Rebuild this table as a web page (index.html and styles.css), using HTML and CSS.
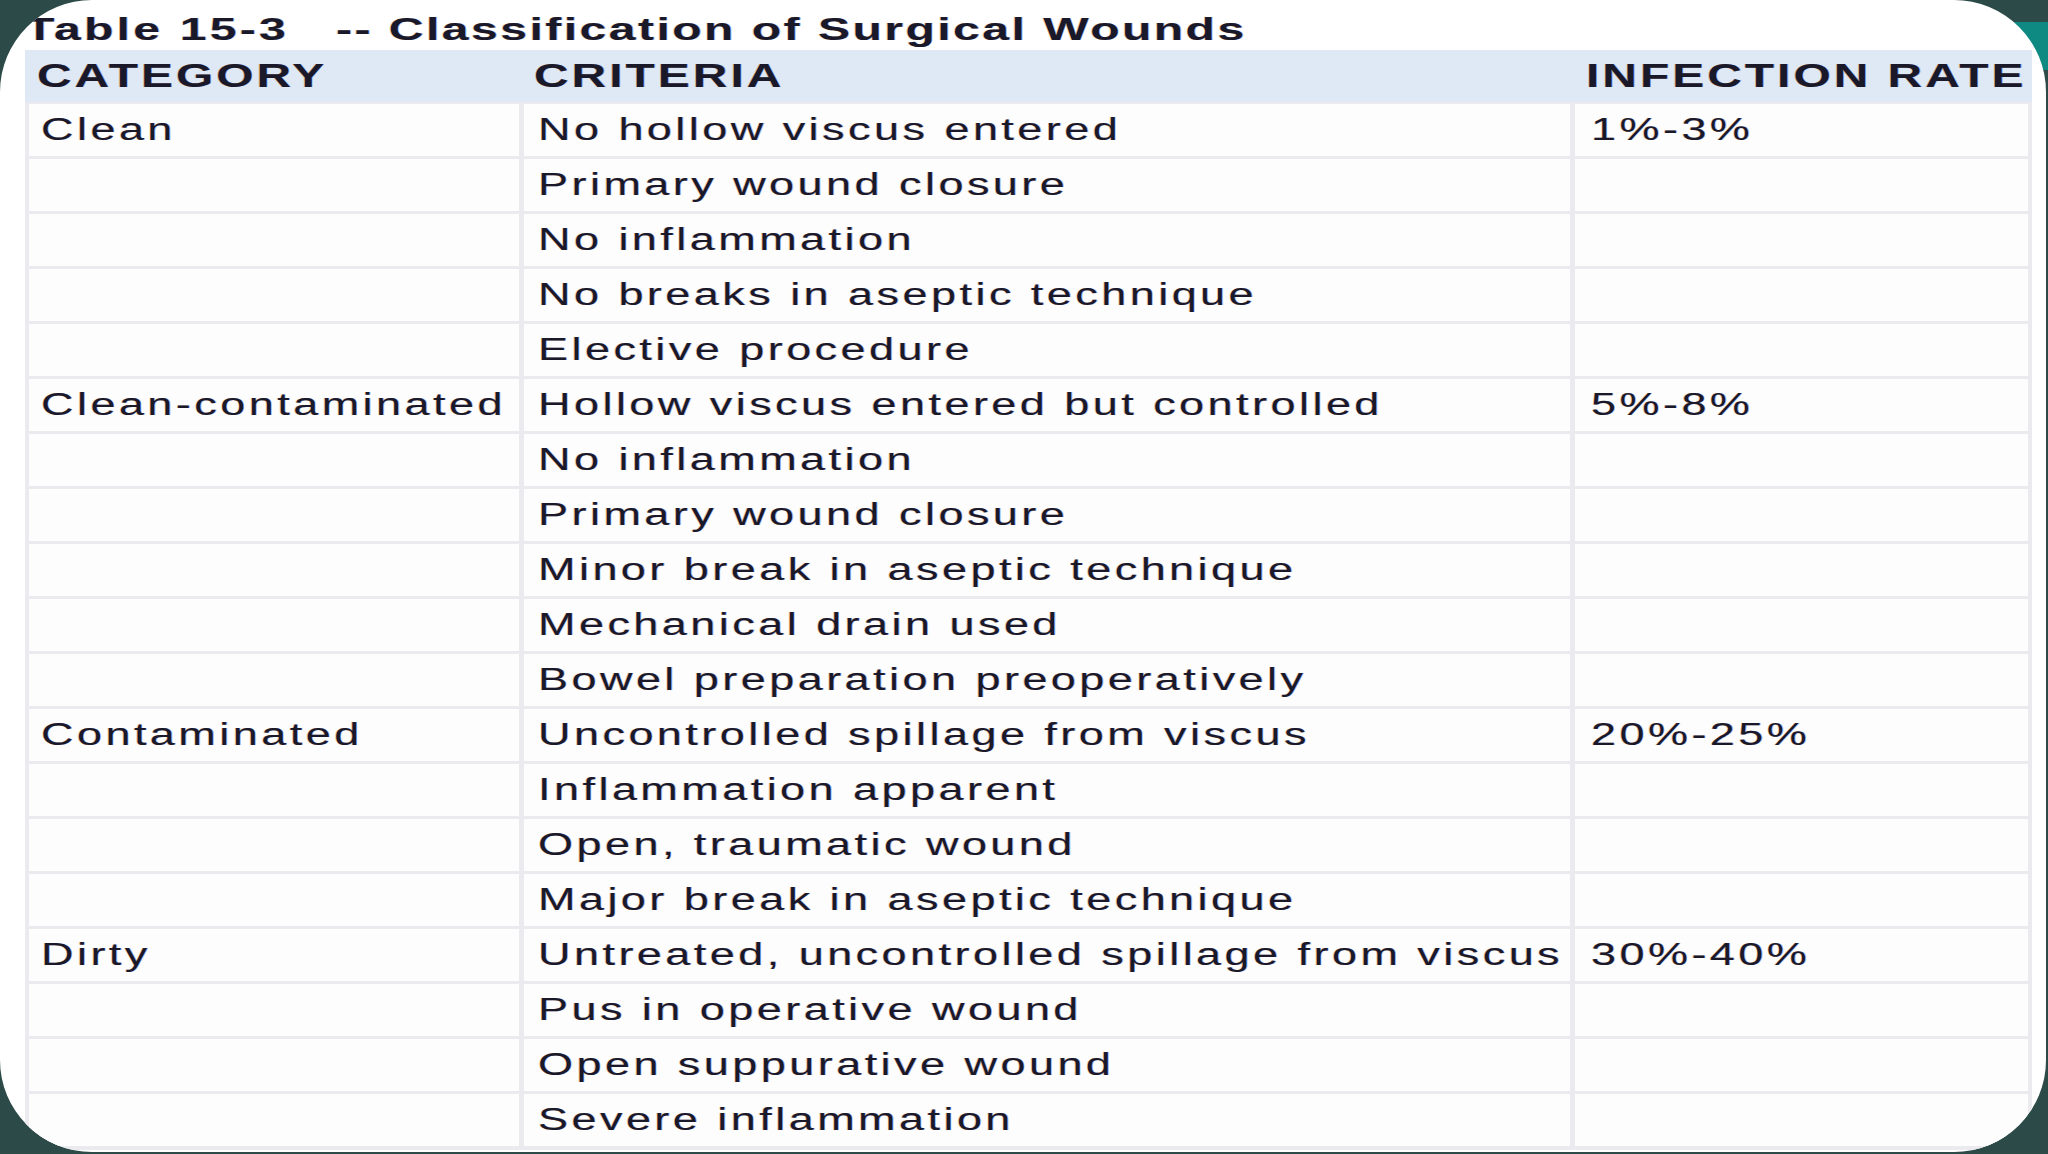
FILE: index.html
```html
<!DOCTYPE html>
<html lang="en">
<head>
<meta charset="utf-8">
<title>Table 15-3 -- Classification of Surgical Wounds</title>
<link rel="stylesheet" href="styles.css">
</head>
<body>
<main class="card">
  <h1 class="title"><span class="t">Table 15-3</span><span class="t">-- Classification of Surgical Wounds</span></h1>
  <div class="head">
    <div class="hcell"><span class="t">CATEGORY</span></div>
    <div class="hcell"><span class="t">CRITERIA</span></div>
    <div class="hcell"><span class="t">INFECTION RATE</span></div>
  </div>
  <div class="grid">
    <div class="cell"><span class="t">Clean</span></div>
    <div class="cell"><span class="t">No hollow viscus entered</span></div>
    <div class="cell"><span class="t">1%-3%</span></div>

    <div class="cell"></div>
    <div class="cell"><span class="t">Primary wound closure</span></div>
    <div class="cell"></div>

    <div class="cell"></div>
    <div class="cell"><span class="t">No inflammation</span></div>
    <div class="cell"></div>

    <div class="cell"></div>
    <div class="cell"><span class="t">No breaks in aseptic technique</span></div>
    <div class="cell"></div>

    <div class="cell"></div>
    <div class="cell"><span class="t">Elective procedure</span></div>
    <div class="cell"></div>

    <div class="cell"><span class="t">Clean-contaminated</span></div>
    <div class="cell"><span class="t">Hollow viscus entered but controlled</span></div>
    <div class="cell"><span class="t">5%-8%</span></div>

    <div class="cell"></div>
    <div class="cell"><span class="t">No inflammation</span></div>
    <div class="cell"></div>

    <div class="cell"></div>
    <div class="cell"><span class="t">Primary wound closure</span></div>
    <div class="cell"></div>

    <div class="cell"></div>
    <div class="cell"><span class="t">Minor break in aseptic technique</span></div>
    <div class="cell"></div>

    <div class="cell"></div>
    <div class="cell"><span class="t">Mechanical drain used</span></div>
    <div class="cell"></div>

    <div class="cell"></div>
    <div class="cell"><span class="t">Bowel preparation preoperatively</span></div>
    <div class="cell"></div>

    <div class="cell"><span class="t">Contaminated</span></div>
    <div class="cell"><span class="t">Uncontrolled spillage from viscus</span></div>
    <div class="cell"><span class="t">20%-25%</span></div>

    <div class="cell"></div>
    <div class="cell"><span class="t">Inflammation apparent</span></div>
    <div class="cell"></div>

    <div class="cell"></div>
    <div class="cell"><span class="t">Open, traumatic wound</span></div>
    <div class="cell"></div>

    <div class="cell"></div>
    <div class="cell"><span class="t">Major break in aseptic technique</span></div>
    <div class="cell"></div>

    <div class="cell"><span class="t">Dirty</span></div>
    <div class="cell"><span class="t">Untreated, uncontrolled spillage from viscus</span></div>
    <div class="cell"><span class="t">30%-40%</span></div>

    <div class="cell"></div>
    <div class="cell"><span class="t">Pus in operative wound</span></div>
    <div class="cell"></div>

    <div class="cell"></div>
    <div class="cell"><span class="t">Open suppurative wound</span></div>
    <div class="cell"></div>

    <div class="cell"></div>
    <div class="cell"><span class="t">Severe inflammation</span></div>
    <div class="cell"></div>
  </div>
</main>
</body>
</html>
```
FILE: styles.css
```css
html, body {
  margin: 0;
  padding: 0;
}

body {
  width: 2048px;
  height: 1154px;
  overflow: hidden;
  background:
    linear-gradient(#0f8a82, #0f8a82) no-repeat right 0 top 22px / 220px 48px,
    #2c4a47;
  font-family: "Liberation Sans", Arial, sans-serif;
  color: #1a1929;
}

.card {
  box-sizing: border-box;
  width: 2046px;
  height: 1152px;
  border-radius: 92px;
  overflow: hidden;
  background: #ffffff;
  padding: 14px 14px 0 25px;
}

.t {
  display: inline-block;
  white-space: nowrap;
  transform: scaleX(1.45);
  transform-origin: 0 50%;
  text-shadow: -0.6px 0 rgba(190, 110, 30, 0.35), 0.6px 0 rgba(40, 60, 200, 0.35);
}

.title {
  margin: 0;
  height: 32px;
  display: flex;
  gap: 141px;
  font-size: 31px;
  line-height: 32px;
  font-weight: bold;
  letter-spacing: 1.6px;
  padding-left: 0;
}

.title .t {
  transform: scaleX(1.55);
}

.title .t:first-child {
  letter-spacing: 2.1px;
}

.head {
  margin-top: 4px;
  height: 52px;
  display: grid;
  grid-template-columns: 490px 1046px 453px;
  column-gap: 5px;
  padding: 0 4px;
  background: #dfe9f6;
  align-items: center;
}

.hcell {
  padding-left: 8px;
  font-size: 33px;
  font-weight: bold;
  letter-spacing: 2.1px;
  line-height: 40px;
}

.hcell:nth-child(2) {
  padding-left: 10px;
}

.hcell:nth-child(3) {
  padding-left: 11px;
}

.grid {
  display: grid;
  grid-template-columns: 490px 1046px 453px;
  grid-auto-rows: 52px;
  gap: 3px 5px;
  padding: 2px 4px 4px;
  background: #ebebef;
}

.cell {
  background: #fdfdfe;
  display: flex;
  align-items: center;
  padding-left: 12px;
  font-size: 31px;
  letter-spacing: 2.4px;
  line-height: 34px;
}

.cell:nth-child(3n+2) {
  padding-left: 14px;
}

.cell:nth-child(3n) {
  padding-left: 16px;
}
```
